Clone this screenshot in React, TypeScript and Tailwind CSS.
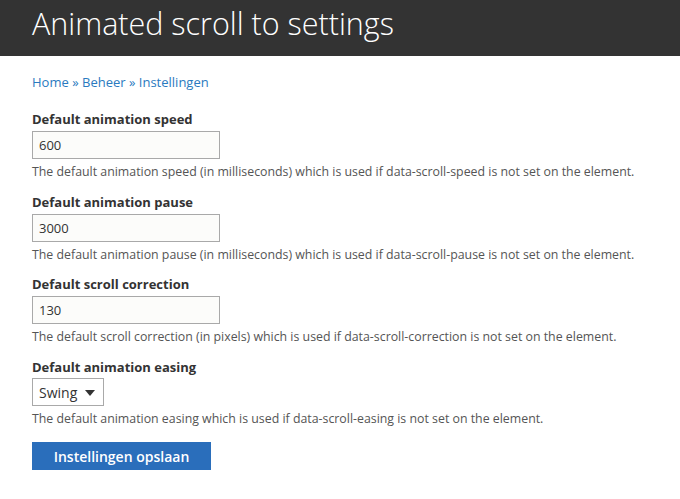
import React from "react";

const fields = [
  {
    label: "Default animation speed",
    value: "600",
    help: "The default animation speed (in milliseconds) which is used if data-scroll-speed is not set on the element.",
  },
  {
    label: "Default animation pause",
    value: "3000",
    help: "The default animation pause (in milliseconds) which is used if data-scroll-pause is not set on the element.",
  },
  {
    label: "Default scroll correction",
    value: "130",
    help: "The default scroll correction (in pixels) which is used if data-scroll-correction is not set on the element.",
  },
];

export default function App() {
  return (
    <div className="min-h-[499px] bg-white text-[#333] font-['Open_Sans',sans-serif]">
      <header className="h-[56px] bg-[#333333] px-8 flex items-center">
        <h1 className="text-[30.5px] font-light text-white leading-none -mt-[10px]">
          Animated scroll to settings
        </h1>
      </header>

      <main className="px-8">
        <nav className="mt-[17px] text-[13px] leading-[18px] text-[#2a7ac0]">
          <a href="#">Home</a> <span>»</span> <a href="#">Beheer</a>{" "}
          <span>»</span> <a href="#">Instellingen</a>
        </nav>

        <form className="mt-[19px]">
          {fields.map((f) => (
            <div key={f.label} className="mb-[12.7px]">
              <label className="block text-[13px] font-bold leading-[18px]">
                {f.label}
              </label>
              <input
                type="text"
                defaultValue={f.value}
                className="mt-[3px] block w-[188px] h-[28px] border border-[#a9a9a9] bg-[#fcfcfa] px-[6px] text-[13px] text-[#333] outline-none"
              />
              <p className="mt-[4px] text-[12.35px] leading-[17px] text-[#555]">
                {f.help}
              </p>
            </div>
          ))}

          <div className="mb-[12px]">
            <label className="block text-[13px] font-bold leading-[18px]">
              Default animation easing
            </label>
            <div className="mt-[2px] relative w-[72px] h-[28px] border border-[#a9a9a9] bg-white flex items-center px-[6px] text-[14px]">
              <span>Swing</span>
              <span className="absolute right-[8px] top-[11px] w-0 h-0 border-l-[5px] border-r-[5px] border-t-[6px] border-l-transparent border-r-transparent border-t-[#333]" />
            </div>
            <p className="mt-[4px] text-[12.35px] leading-[17px] text-[#555]">
              The default animation easing which is used if data-scroll-easing is not set on the element.
            </p>
          </div>

          <button
            type="button"
            className="mt-[3px] w-[179px] h-[28px] bg-[#2a6ebb] text-white text-[14px] font-semibold"
          >
            Instellingen opslaan
          </button>
        </form>
      </main>
    </div>
  );
}
